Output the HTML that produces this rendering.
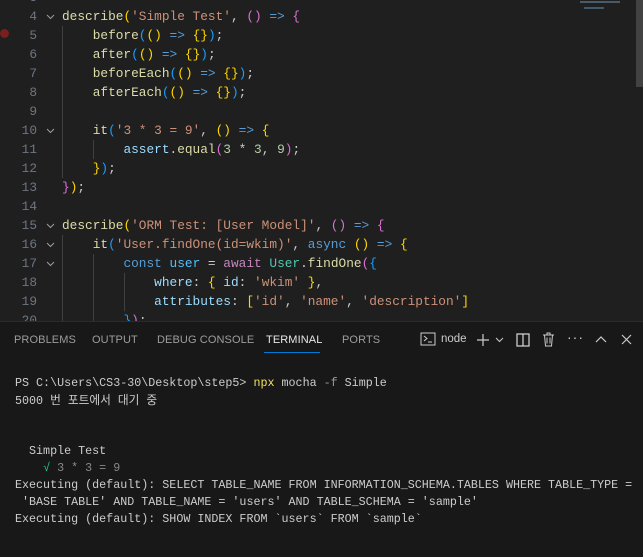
<!DOCTYPE html>
<html><head><meta charset="utf-8"><style>
*{margin:0;padding:0;box-sizing:border-box}
body{width:643px;height:557px;overflow:hidden;background:#1f1f1f;position:relative;font-family:"Liberation Mono","Noto Sans CJK KR",monospace}
.ed{position:absolute;left:0;top:0;width:643px;height:321px;background:#1f1f1f;overflow:hidden}
.ln{position:absolute;left:0;width:37px;text-align:right;color:#6e7681;font-size:12.8px;line-height:19px}
.cd{position:absolute;left:62px;font-size:12.8px;line-height:19px;color:#cccccc;white-space:pre}
.fold{position:absolute;left:46px;width:9px;height:6px}
.f{color:#dcdcaa}.s{color:#ce9178}.g{color:#ffd700}.p{color:#da70d6}.b{color:#179fff}.k{color:#569cd6}.v{color:#9cdcfe}.c{color:#4fc1ff}.a{color:#c586c0}.t{color:#4ec9b0}.n{color:#b5cea8}
.guide{position:absolute;width:1px;background:#404040}
.panel{position:absolute;left:0;top:321px;width:643px;height:236px;background:#181818;border-top:1px solid #2b2b2b}
.tab{position:absolute;top:12px;font-family:"Liberation Sans",sans-serif;font-size:11px;color:#9d9d9d;letter-spacing:0.1px}
.term{position:absolute;left:15px;font-size:11.7px;line-height:17px;color:#cccccc;white-space:pre;font-family:"Liberation Mono","Noto Sans CJK KR",monospace}
.ic{position:absolute;color:#cccccc;font-family:"Liberation Sans","DejaVu Sans",sans-serif}
</style></head><body>
<div class="ed">
<div class="guide" style="left:62px;top:26px;height:152px"></div>
<div class="guide" style="left:93px;top:140px;height:19px"></div>
<div class="guide" style="left:62px;top:235px;height:86px"></div>
<div class="guide" style="left:93px;top:254px;height:67px"></div>
<div class="guide" style="left:124px;top:273px;height:38px"></div>
<div style="position:absolute;left:0;top:29px;width:9px;height:9px;border-radius:50%;background:#7a1e1e"></div>
<div class="ln" style="top:-12px">3</div>
<div class="ln" style="top:7px">4</div><svg class="fold" style="top:14px"><path d="M1 1l3.5 3.5L8 1" stroke="#9d9d9d" fill="none"/></svg>
<div class="ln" style="top:26px">5</div>
<div class="ln" style="top:45px">6</div>
<div class="ln" style="top:64px">7</div>
<div class="ln" style="top:83px">8</div>
<div class="ln" style="top:102px">9</div>
<div class="ln" style="top:121px">10</div><svg class="fold" style="top:128px"><path d="M1 1l3.5 3.5L8 1" stroke="#9d9d9d" fill="none"/></svg>
<div class="ln" style="top:140px">11</div>
<div class="ln" style="top:159px">12</div>
<div class="ln" style="top:178px">13</div>
<div class="ln" style="top:197px">14</div>
<div class="ln" style="top:216px">15</div><svg class="fold" style="top:223px"><path d="M1 1l3.5 3.5L8 1" stroke="#9d9d9d" fill="none"/></svg>
<div class="ln" style="top:235px">16</div><svg class="fold" style="top:242px"><path d="M1 1l3.5 3.5L8 1" stroke="#9d9d9d" fill="none"/></svg>
<div class="ln" style="top:254px">17</div><svg class="fold" style="top:261px"><path d="M1 1l3.5 3.5L8 1" stroke="#9d9d9d" fill="none"/></svg>
<div class="ln" style="top:273px">18</div>
<div class="ln" style="top:292px">19</div>
<div class="ln" style="top:311px">20</div>
<div class="cd" style="top:7px"><span class="f">describe</span><span class="g">(</span><span class="s">'Simple Test'</span>, <span class="p">()</span> <span class="k">=&gt;</span> <span class="p">{</span></div>
<div class="cd" style="top:26px">    <span class="f">before</span><span class="b">(</span><span class="g">()</span> <span class="k">=&gt;</span> <span class="g">{}</span><span class="b">)</span>;</div>
<div class="cd" style="top:45px">    <span class="f">after</span><span class="b">(</span><span class="g">()</span> <span class="k">=&gt;</span> <span class="g">{}</span><span class="b">)</span>;</div>
<div class="cd" style="top:64px">    <span class="f">beforeEach</span><span class="b">(</span><span class="g">()</span> <span class="k">=&gt;</span> <span class="g">{}</span><span class="b">)</span>;</div>
<div class="cd" style="top:83px">    <span class="f">afterEach</span><span class="b">(</span><span class="g">()</span> <span class="k">=&gt;</span> <span class="g">{}</span><span class="b">)</span>;</div>
<div class="cd" style="top:121px">    <span class="f">it</span><span class="b">(</span><span class="s">'3 * 3 = 9'</span>, <span class="g">()</span> <span class="k">=&gt;</span> <span class="g">{</span></div>
<div class="cd" style="top:140px">        <span class="v">assert</span>.<span class="f">equal</span><span class="p">(</span><span class="n">3</span> * <span class="n">3</span>, <span class="n">9</span><span class="p">)</span>;</div>
<div class="cd" style="top:159px">    <span class="g">}</span><span class="b">)</span>;</div>
<div class="cd" style="top:178px"><span class="p">}</span><span class="g">)</span>;</div>
<div class="cd" style="top:216px"><span class="f">describe</span><span class="g">(</span><span class="s">'ORM Test: [User Model]'</span>, <span class="p">()</span> <span class="k">=&gt;</span> <span class="p">{</span></div>
<div class="cd" style="top:235px">    <span class="f">it</span><span class="b">(</span><span class="s">'User.findOne(id=wkim)'</span>, <span class="k">async</span> <span class="g">()</span> <span class="k">=&gt;</span> <span class="g">{</span></div>
<div class="cd" style="top:254px">        <span class="k">const</span> <span class="c">user</span> = <span class="a">await</span> <span class="t">User</span>.<span class="f">findOne</span><span class="p">(</span><span class="b">{</span></div>
<div class="cd" style="top:273px">            <span class="v">where</span>: <span class="g">{</span> <span class="v">id</span>: <span class="s">'wkim'</span> <span class="g">}</span>,</div>
<div class="cd" style="top:292px">            <span class="v">attributes</span>: <span class="g">[</span><span class="s">'id'</span>, <span class="s">'name'</span>, <span class="s">'description'</span><span class="g">]</span></div>
<div class="cd" style="top:311px">        <span class="b">}</span><span class="p">)</span>;</div>
<div style="position:absolute;left:580px;top:1px;width:40px;height:2px;background:#4a5a66"></div>
<div style="position:absolute;left:584px;top:7px;width:20px;height:2px;background:#3f5a6a"></div>
<div style="position:absolute;left:636px;top:0;width:7px;height:87px;background:#424242"></div>
</div>
<div class="panel">
<div class="tab" style="left:14px">PROBLEMS</div>
<div class="tab" style="left:92px">OUTPUT</div>
<div class="tab" style="left:157px">DEBUG CONSOLE</div>
<div class="tab" style="left:266px;color:#e7e7e7">TERMINAL</div>
<div class="tab" style="left:342px">PORTS</div>
<div style="position:absolute;left:264px;top:30px;width:56px;height:1px;background:#0078d4"></div>
<svg style="position:absolute;left:420px;top:10px" width="16" height="14" viewBox="0 0 16 14"><rect x="1" y="1" width="14" height="12" fill="none" stroke="#ccc" stroke-width="1"/><path d="M4 4l3 2.5-3 2.5M8 10h4" stroke="#ccc" fill="none"/></svg>
<div class="ic" style="left:441px;top:11px;font-size:11.5px">node</div>
<svg style="position:absolute;left:476px;top:11px" width="14" height="14"><path d="M7 1v12M1 7h12" stroke="#ccc" stroke-width="1.2"/></svg>
<svg style="position:absolute;left:495px;top:15px" width="9" height="6"><path d="M1 1l3.5 3.5L8 1" stroke="#ccc" fill="none"/></svg>
<svg style="position:absolute;left:516px;top:11px" width="14" height="14"><rect x="1" y="1" width="12" height="12" fill="none" stroke="#ccc" stroke-width="1.3"/><path d="M7 1v12" stroke="#ccc" stroke-width="1.3"/></svg>
<svg style="position:absolute;left:542px;top:10px" width="13" height="15"><path d="M1 3h11M5 3V1h3v2M2.5 3l1 11h6l1-11M5 5.5v6M8 5.5v6" stroke="#ccc" fill="none"/></svg>
<div class="ic" style="left:567px;top:7px;font-size:14px;letter-spacing:1px">···</div>
<svg style="position:absolute;left:595px;top:13px" width="12" height="8"><path d="M1 7l5-5 5 5" stroke="#ccc" fill="none" stroke-width="1.2"/></svg>
<svg style="position:absolute;left:621px;top:12px" width="11" height="11"><path d="M1 1l9 9M10 1l-9 9" stroke="#ccc" stroke-width="1.2"/></svg>
<div class="term" style="top:53px">PS C:\Users\CS3-30\Desktop\step5&gt; <span style="color:#f1e05a">npx</span> mocha <span style="color:#999">-f</span> Simple</div>
<div class="term" style="top:71px">5000 번 포트에서 대기 중</div>
<div class="term" style="top:121px">  Simple Test</div>
<div class="term" style="top:138px">    <span style="color:#23d18b">√</span> <span style="color:#8a8a8a">3 * 3 = 9</span></div>
<div class="term" style="top:155px">Executing (default): SELECT TABLE_NAME FROM INFORMATION_SCHEMA.TABLES WHERE TABLE_TYPE =</div>
<div class="term" style="top:172px"> 'BASE TABLE' AND TABLE_NAME = 'users' AND TABLE_SCHEMA = 'sample'</div>
<div class="term" style="top:189px">Executing (default): SHOW INDEX FROM `users` FROM `sample`</div>
</div>
</body></html>
